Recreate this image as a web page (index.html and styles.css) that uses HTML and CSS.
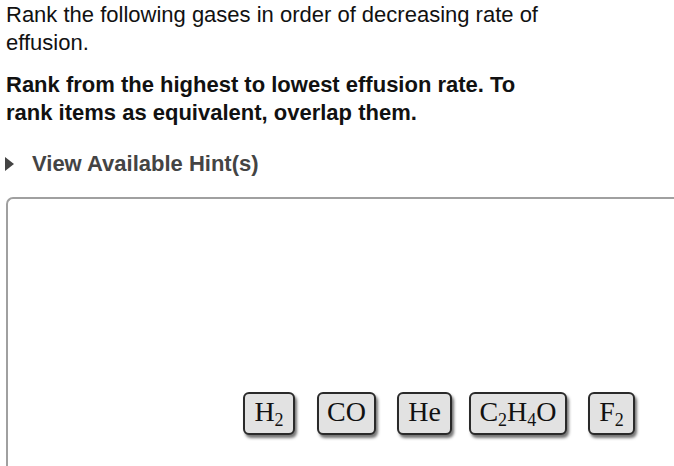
FILE: index.html
```html
<!DOCTYPE html>
<html>
<head>
<meta charset="utf-8">
<link rel="stylesheet" href="styles.css">
</head>
<body>
<div class="page">
  <p class="intro">Rank the following gases in order of decreasing rate of effusion.</p>
  <p class="instr">Rank from the highest to lowest effusion rate. To rank items as equivalent, overlap them.</p>
  <div class="hint"><span class="tri"></span><span>View Available Hint(s)</span></div>
  <div class="box">
    <div class="tiles">
      <div class="tile t-h2"><span>H<sub>2</sub></span></div>
      <div class="tile t-co"><span>CO</span></div>
      <div class="tile t-he"><span>He</span></div>
      <div class="tile t-c2"><span>C<sub>2</sub>H<sub>4</sub>O</span></div>
      <div class="tile t-f2"><span>F<sub>2</sub></span></div>
    </div>
  </div>
</div>
</body>
</html>
```
FILE: styles.css
```css
html, body { margin: 0; padding: 0; background: #fff; }
body { width: 674px; height: 466px; overflow: hidden; font-family: "Liberation Sans", Arial, sans-serif; color: #111; }
.page { padding: 0 0 0 6px; }
.intro { margin: 0; padding-top: 1px; font-size: 22px; line-height: 28px; width: 560px; }
.instr { margin: 14px 0 0; font-size: 22px; line-height: 28px; font-weight: bold; width: 520px; }
.hint { margin-top: 24px; display: flex; align-items: center; gap: 18px; font-size: 22px; font-weight: bold; color: #444; height: 26px; }
.tri { width: 0; height: 0; border-top: 7.5px solid transparent; border-bottom: 7.5px solid transparent; border-left: 9px solid #444; margin-left: -1px; }
.box { margin-top: 20px; height: 280px; border-top: 2px solid #a0a0a0; border-left: 2px solid #a0a0a0; border-top-left-radius: 7px; }
.tiles { display: flex; padding-top: 193px; padding-left: 235px; }
.tile { font-family: "Liberation Serif", "Times New Roman", serif; font-size: 28px; color: #111; background: #e2e2e2; border: 2px solid #2a2a2a; border-radius: 6px; height: 43px; box-sizing: border-box; display: flex; align-items: center; justify-content: center; box-shadow: 2px 3px 3px rgba(0,0,0,0.55); }
.tile span { line-height: 1; margin-top: -3px; }
.tile sub { font-size: 18px; vertical-align: -5px; line-height: 0; }
.t-h2 { width: 52px; }
.t-co { width: 59px; margin-left: 22px; }
.t-he { width: 55px; margin-left: 21px; }
.t-c2 { width: 98px; margin-left: 17px; }
.t-f2 { width: 47px; margin-left: 21px; }
```
